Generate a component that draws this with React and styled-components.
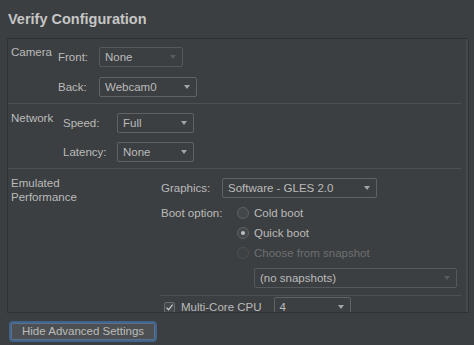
import React from 'react';
import styled, { createGlobalStyle } from 'styled-components';

const Global = createGlobalStyle`
  html, body { margin: 0; padding: 0; background: #3c3f41; }
  body { font-family: "Liberation Sans", Arial, sans-serif; }
`;

const Page = styled.div`
  width: 474px;
  height: 345px;
  box-sizing: border-box;
  background: #3c3f41;
  color: #bbbbbb;
  font-size: 11.5px;
  display: flex;
  flex-direction: column;
  overflow: hidden;
`;

const Title = styled.h1`
  margin: 11px 0 0 8px;
  font-size: 14.5px;
  font-weight: bold;
  line-height: 16px;
  color: #c6c6c6;
`;

const Panel = styled.div`
  margin: 11px 0 0 7px;
  width: 462px;
  height: 275px;
  box-sizing: border-box;
  border: 1px solid #2f3133;
  box-shadow: inset -2px 0 0 #46494b;
  padding-right: 7px;
  overflow: hidden;
  display: flex;
  flex-direction: column;
`;

const Section = styled.div`
  display: grid;
  grid-template-columns: ${(p) => p.$labelWidth}px 1fr;
  align-items: start;
  padding: ${(p) => p.$pt}px 0 ${(p) => p.$pb}px 0;
  border-bottom: ${(p) => (p.$last ? 'none' : '1px solid #4e5153')};
`;

const SectionLabel = styled.div`
  padding-left: 3px;
  margin-top: -2px;
  line-height: 14px;
`;

const Fields = styled.div`
  display: grid;
  grid-template-columns: ${(p) => p.$labelWidth}px 1fr;
  grid-auto-rows: auto;
  row-gap: ${(p) => p.$gap}px;
  align-items: center;
`;

const FieldLabel = styled.div`
  line-height: 20px;
  white-space: nowrap;
  align-self: ${(p) => (p.$top ? 'start' : 'center')};
`;

const Combo = styled.div`
  box-sizing: border-box;
  width: ${(p) => p.$w}px;
  height: 20px;
  border: 1px solid ${(p) => (p.$disabled ? '#56595b' : '#606366')};
  border-radius: 2px;
  background: #3c3f41;
  display: flex;
  align-items: center;
  justify-content: space-between;
  padding: 0 6px 0 5px;
  margin-left: ${(p) => p.$ml || 0}px;
  color: #bbbbbb;
  white-space: nowrap;
`;

const Arrow = styled.span`
  width: 0;
  height: 0;
  border-left: 3.5px solid transparent;
  border-right: 3.5px solid transparent;
  border-top: 4px solid ${(p) => (p.$disabled ? '#595c5e' : '#a3a6a9')};
`;

const RadioGroup = styled.div`
  grid-column: 2;
  margin-left: 15px;
  display: flex;
  flex-direction: column;
`;

const RadioRow = styled.div`
  height: 20px;
  display: flex;
  align-items: center;
  gap: 5px;
  color: ${(p) => (p.$disabled ? '#6c6f71' : '#bbbbbb')};
`;

const RadioCircle = styled.span`
  box-sizing: border-box;
  width: 12px;
  height: 12px;
  border-radius: 50%;
  border: 1px solid ${(p) => (p.$disabled ? '#4d5052' : '#5f6264')};
  background: ${(p) => (p.$disabled ? '#3e4143' : '#43474a')};
  display: flex;
  align-items: center;
  justify-content: center;
  &::after {
    content: '';
    width: 4px;
    height: 4px;
    border-radius: 50%;
    background: #c0c0c0;
    display: ${(p) => (p.$checked ? 'block' : 'none')};
  }
`;

const SnapshotSpan = styled.div`
  grid-column: 2;
`;

const Divider = styled.div`
  grid-column: 1 / -1;
  margin: 2px 0 0 -1px;
  height: 1px;
  background: #4e5153;
`;

const CheckRow = styled.div`
  grid-column: 1 / -1;
  margin-top: -4px;
  display: flex;
  align-items: center;
  padding-left: 3px;
`;

const CheckBox = styled.span`
  box-sizing: border-box;
  width: 11px;
  height: 11px;
  border: 1px solid #6a6d70;
  border-radius: 2px;
  background: #43474a;
  display: flex;
  align-items: center;
  justify-content: center;
  margin-right: 6px;
`;

const CheckText = styled.span`
  margin-right: 12px;
  line-height: 20px;
`;

const Footer = styled.div`
  display: flex;
  padding: 8px 0 0 9px;
`;

const Button = styled.button`
  box-sizing: border-box;
  height: 21px;
  padding: 0 11px;
  border: 2px solid #41648a;
  box-shadow: inset 0 0 0 1px #5a7290;
  border-radius: 4px;
  background: #4c5052;
  color: #bbbbbb;
  font-family: "Liberation Sans", Arial, sans-serif;
  font-size: 11.5px;
  line-height: 17px;
`;

const Select = ({ w, value, disabled, ml }) => (
  <Combo $w={w} $disabled={disabled} $ml={ml}>
    <span>{value}</span>
    <Arrow $disabled={disabled} />
  </Combo>
);

const Radio = ({ label, checked, disabled }) => (
  <RadioRow $disabled={disabled}>
    <RadioCircle $checked={checked} $disabled={disabled} />
    <span>{label}</span>
  </RadioRow>
);

export default function App() {
  return (
    <Page>
      <Global />
      <Title>Verify Configuration</Title>
      <Panel>
        <Section $labelWidth={50} $pt={8} $pb={6}>
          <SectionLabel>Camera</SectionLabel>
          <Fields $labelWidth={41} $gap={10}>
            <FieldLabel>Front:</FieldLabel>
            <Select w={84} value="None" disabled />
            <FieldLabel>Back:</FieldLabel>
            <Select w={98} value="Webcam0" />
          </Fields>
        </Section>
        <Section $labelWidth={55} $pt={9} $pb={6}>
          <SectionLabel>Network</SectionLabel>
          <Fields $labelWidth={54} $gap={9}>
            <FieldLabel>Speed:</FieldLabel>
            <Select w={77} value="Full" />
            <FieldLabel>Latency:</FieldLabel>
            <Select w={77} value="None" />
          </Fields>
        </Section>
        <Section $labelWidth={153} $pt={9} $pb={0} $last>
          <SectionLabel>
            Emulated
            <br />
            Performance
          </SectionLabel>
          <Fields $labelWidth={61} $gap={5}>
            <FieldLabel>Graphics:</FieldLabel>
            <Select w={155} value="Software - GLES 2.0" />
            <FieldLabel $top>Boot option:</FieldLabel>
            <RadioGroup>
              <Radio label="Cold boot" />
              <Radio label="Quick boot" checked />
              <Radio label="Choose from snapshot" disabled />
            </RadioGroup>
            <SnapshotSpan>
              <Select w={203} value="(no snapshots)" disabled ml={32} />
            </SnapshotSpan>
            <Divider />
            <CheckRow>
              <CheckBox>
                <svg width="9" height="9" viewBox="0 0 9 9">
                  <path d="M1.5 4.6 L3.6 6.8 L7.6 1.6" fill="none" stroke="#c8c8c8" strokeWidth="1.3" />
                </svg>
              </CheckBox>
              <CheckText>Multi-Core CPU</CheckText>
              <Select w={77} value="4" />
            </CheckRow>
          </Fields>
        </Section>
      </Panel>
      <Footer>
        <Button>Hide Advanced Settings</Button>
      </Footer>
    </Page>
  );
}
